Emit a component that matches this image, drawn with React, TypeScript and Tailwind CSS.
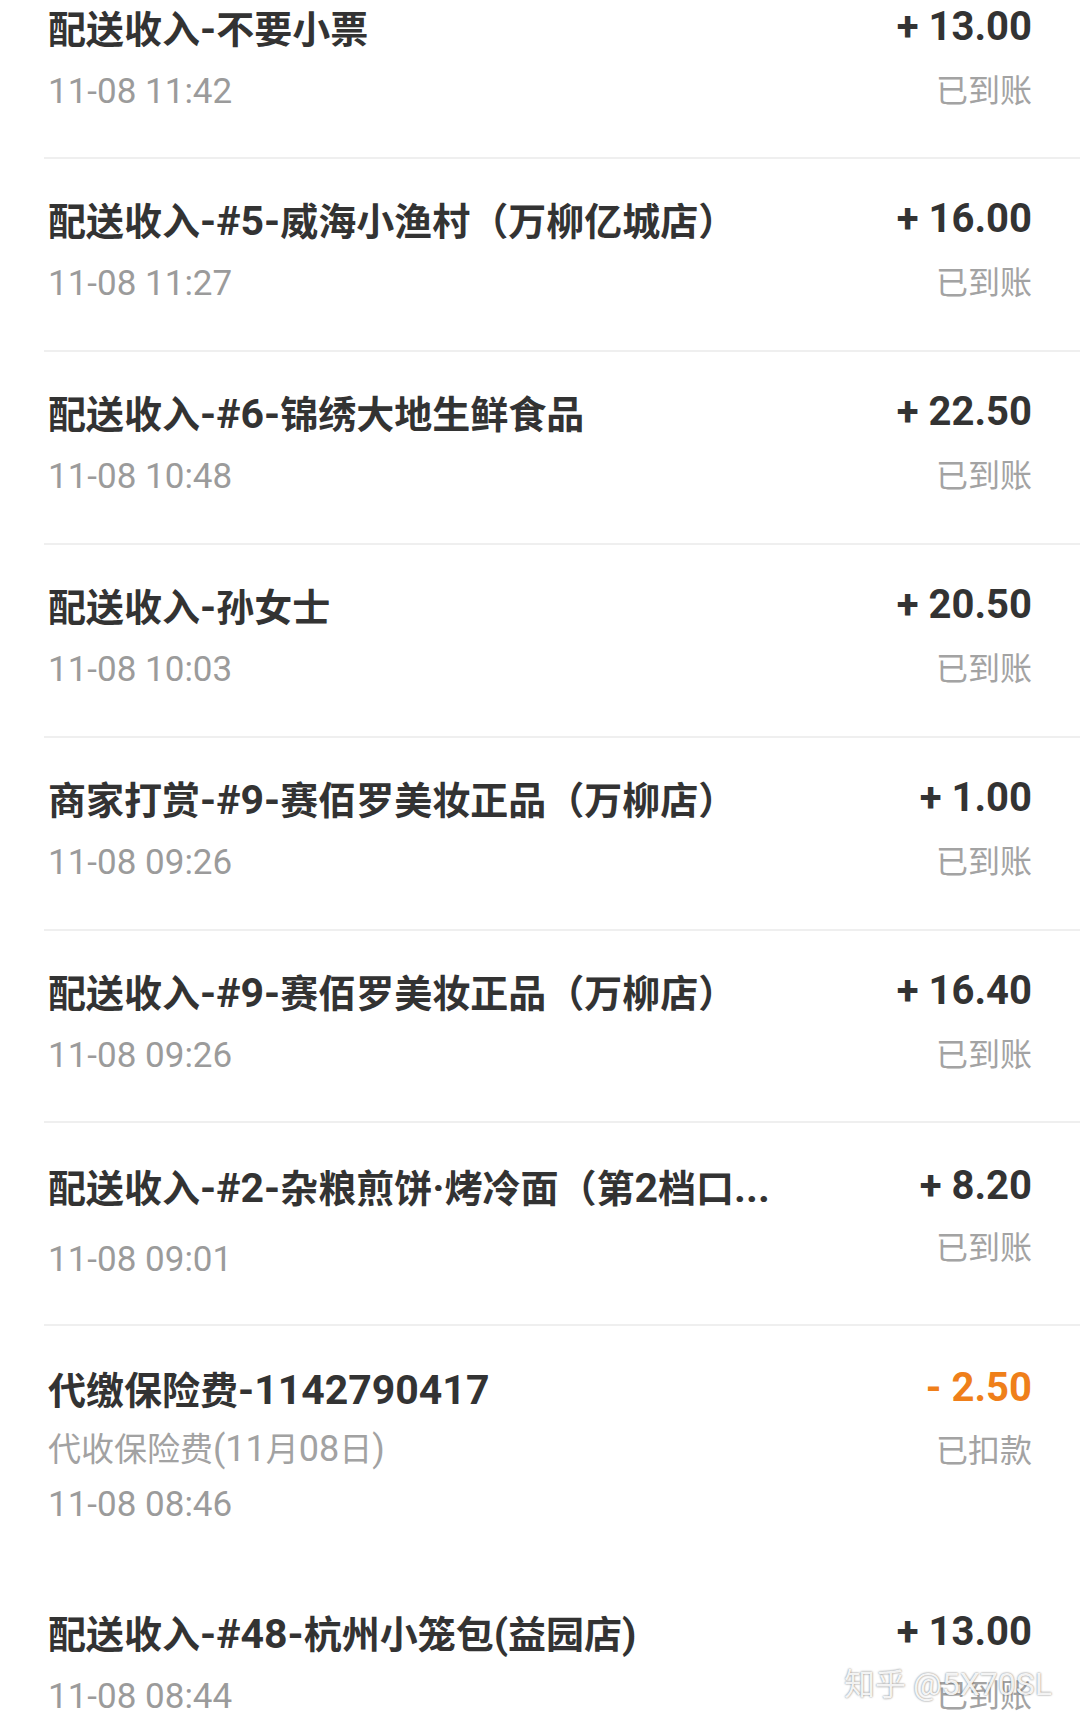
import React from 'react';

type Row = {
  title: string;
  sub?: string;
  time: string;
  amount: string;
  status: string;
  minus?: boolean;
  pad: string;
  gapL: string;
  gapR: string;
  border?: boolean;
};

const rows: Row[] = [
  { title: '配送收入-不要小票', time: '11-08 11:42', amount: '+ 13.00', status: '已到账', pad: 'pt-[2px] pb-[43px]', gapL: 'mt-[18px]', gapR: 'mt-[14px]' },
  { title: '配送收入-#5-威海小渔村（万柳亿城店）', time: '11-08 11:27', amount: '+ 16.00', status: '已到账', pad: 'pt-[35px] pb-[44px]', gapL: 'mt-[18px]', gapR: 'mt-[14px]', border: true },
  { title: '配送收入-#6-锦绣大地生鲜食品', time: '11-08 10:48', amount: '+ 22.50', status: '已到账', pad: 'pt-[35px] pb-[44px]', gapL: 'mt-[18px]', gapR: 'mt-[14px]', border: true },
  { title: '配送收入-孙女士', time: '11-08 10:03', amount: '+ 20.50', status: '已到账', pad: 'pt-[35px] pb-[44px]', gapL: 'mt-[18px]', gapR: 'mt-[14px]', border: true },
  { title: '商家打赏-#9-赛佰罗美妆正品（万柳店）', time: '11-08 09:26', amount: '+ 1.00', status: '已到账', pad: 'pt-[35px] pb-[44px]', gapL: 'mt-[18px]', gapR: 'mt-[14px]', border: true },
  { title: '配送收入-#9-赛佰罗美妆正品（万柳店）', time: '11-08 09:26', amount: '+ 16.40', status: '已到账', pad: 'pt-[35px] pb-[43px]', gapL: 'mt-[18px]', gapR: 'mt-[14px]', border: true },
  { title: '配送收入-#2-杂粮煎饼·烤冷面（第2档口...', time: '11-08 09:01', amount: '+ 8.20', status: '已到账', pad: 'pt-[38px] pb-[42px]', gapL: 'mt-[27px]', gapR: 'mt-[12px]', border: true },
  { title: '代缴保险费-1142790417', sub: '代收保险费(11月08日)', time: '11-08 08:46', amount: '- 2.50', status: '已扣款', minus: true, pad: 'pt-[37px] pb-[42px]', gapL: 'mt-[14px]', gapR: 'mt-[13px]', border: true },
  { title: '配送收入-#48-杭州小笼包(益园店)', time: '11-08 08:44', amount: '+ 13.00', status: '已到账', pad: 'pt-[38px] pb-[40px]', gapL: 'mt-[18px]', gapR: 'mt-[14px]' },
];

// latin runs are drawn a bit larger, like the phone's system font
const Mixed = ({ text, latin }: { text: string; latin: string }) => (
  <>
    {text.split(/([\x20-\x7E\u00B7]+)/).map((part, i) =>
      /^[\x20-\x7E\u00B7]+$/.test(part) ? (
        <span key={i} className={latin}>{part}</span>
      ) : (
        <span key={i}>{part}</span>
      )
    )}
  </>
);

const App = () => {
  return (
    <div className="relative h-[1726px] w-[1080px] overflow-hidden bg-white">
      {rows.map((r, idx) => (
        <div key={idx} className={`ml-[44px] ${r.border ? 'border-t-2 border-[#efefef]' : ''}`}>
          <div className={`flex justify-between pl-[4px] pr-[48px] ${r.pad}`}>
            <div className="flex flex-col">
              <div className="h-[50px] whitespace-nowrap font-['Noto_Sans_CJK_SC',sans-serif] text-[38px] font-bold leading-[50px] text-[#333333]">
                <Mixed text={r.title} latin="font-['Roboto',sans-serif] text-[41px] leading-[40px]" />
              </div>
              {r.sub && (
                <div className="mt-[12px] h-[44px] whitespace-nowrap font-['Noto_Sans_CJK_SC',sans-serif] text-[33px] leading-[44px] text-[#a2a2a2]">
                  <Mixed text={r.sub} latin="font-['Roboto',sans-serif] text-[36px] leading-[36px]" />
                </div>
              )}
              <div className={`${r.gapL} h-[44px] font-['Roboto',sans-serif] text-[35px] leading-[44px] text-[#9b9b9b]`}>
                {r.time}
              </div>
            </div>
            <div className="flex flex-col items-end">
              <div className={`h-[50px] whitespace-nowrap font-['Roboto',sans-serif] text-[40px] font-bold leading-[50px] ${r.minus ? 'text-[#ef7f1a]' : 'text-[#333333]'}`}>
                {r.amount}
              </div>
              <div className={`${r.gapR} h-[44px] font-['Noto_Sans_CJK_SC',sans-serif] text-[32px] leading-[44px] text-[#a3a3a3]`}>
                {r.status}
              </div>
            </div>
          </div>
        </div>
      ))}

      {/* zhihu watermark */}
      <div className="absolute right-[28px] top-[1662px] whitespace-nowrap font-['Noto_Sans_CJK_SC',sans-serif] text-[31px] leading-[40px] text-white/90 [text-shadow:0_0_2px_rgba(0,0,0,0.6)]">
        知乎 <span className="font-['Roboto',sans-serif] text-[32px]">@5X70SL</span>
      </div>
    </div>
  );
};

export default App;
